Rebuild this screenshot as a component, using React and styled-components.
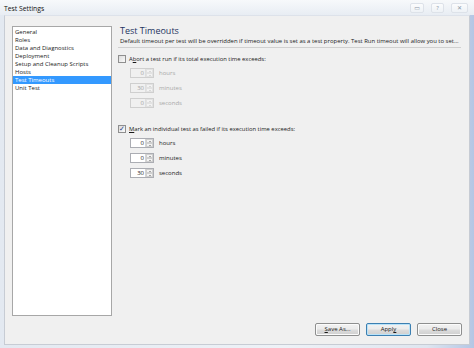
import React from "react";
import styled, { createGlobalStyle } from "styled-components";

const Global = createGlobalStyle`
  html, body { margin: 0; padding: 0; }
  body {
    width: 474px; height: 348px; overflow: hidden;
    background: linear-gradient(90deg, #e3e9f1 0%, #eef2f7 60%, #dfe6f0 90%, #b4c6e4 100%);
    font-family: "Open Sans", "Noto Sans", "DejaVu Sans", sans-serif;
  }
`;

const Window = styled.div`
  width: 474px; height: 348px; display: flex; flex-direction: column; box-sizing: border-box;
`;

const TitleBar = styled.div`
  height: 15px; flex: none; display: flex; align-items: center; padding: 0 6px 0 4px;
  background: linear-gradient(180deg, #f7f9fb 0%, #e8edf3 100%);
`;

const Title = styled.div`
  font-size: 6.8px; color: #111; flex: 1; padding-top: 1px;
`;

const Caption = styled.div`
  display: flex; gap: 7px; align-items: center;
`;

const CapButton = styled.div`
  width: ${p => p.$w}px; height: 10px; border: 1px solid #dde2e9; border-radius: 2px;
  background: linear-gradient(180deg, #fbfcfd, #eef2f6);
  display: flex; align-items: center; justify-content: center;
  font-size: 6px; color: #8a96a6; box-sizing: border-box;
`;

const Client = styled.div`
  flex: 1; margin: 0 4px 6px 4px; background: #f0f0f0;
  border: 1px solid #c7ccd4; border-top: 1px solid #dde2ea;
  display: flex; flex-direction: column; box-sizing: border-box;
`;

const Body = styled.div`
  flex: 1; display: flex; gap: 6px; padding: 8px 8px 0 7px; min-width: 0;
`;

const List = styled.div`
  flex: none; width: 100px; height: 290px; margin-top: 2px; box-sizing: border-box; background: #fff;
  border: 1px solid #a7a7a7; padding-top: 1px; display: flex; flex-direction: column;
`;

const Item = styled.div`
  height: 8px; line-height: 8px; font-size: 6px; padding-left: 2px;
  color: ${p => (p.$sel ? "#fff" : "#1a1a1a")};
  background: ${p => (p.$sel ? "#3399ff" : "transparent")};
  white-space: nowrap;
`;

const Panel = styled.div`
  flex: 1; min-width: 0; display: flex; flex-direction: column;
`;

const Heading = styled.div`
  font-size: 9px; color: #1f3562; padding-left: 2px; line-height: 13px;
`;

const Desc = styled.div`
  font-size: 5.95px; color: #1a1a1a; padding-left: 2px; line-height: 9px; white-space: nowrap;
  overflow: hidden; border-bottom: 1px solid #d0d0d0; padding-bottom: 1px;
`;

const CheckRow = styled.div`
  display: flex; align-items: center; gap: 3px; margin-top: ${p => p.$mt}px;
  font-size: 5.85px; color: #1a1a1a; height: 9px;
`;

const Box = styled.div`
  width: 8px; height: 8px; box-sizing: border-box; border: 1px solid #8f8f8f;
  background: linear-gradient(135deg, #dcdcdc, #fbfbfb);
  display: flex; align-items: center; justify-content: center;
  font-size: 7px; color: #1b3f8b; line-height: 8px;
`;

const SpinGroup = styled.div`
  display: flex; flex-direction: column; gap: 5px; padding-left: 12px; margin-top: 5px;
`;

const SpinRow = styled.div`
  display: flex; align-items: center; gap: 5px;
`;

const Spin = styled.div`
  display: flex; height: 10px; width: 24px; box-sizing: border-box;
  border: 1px solid ${p => (p.$off ? "#cfcfcf" : "#abadb3")};
  background: ${p => (p.$off ? "#f0f0f0" : "#fff")};
`;

const SpinValue = styled.div`
  flex: 1; text-align: right; font-size: 6px; line-height: 8px; padding-right: 1px;
  color: ${p => (p.$off ? "#a3a3a3" : "#1a1a1a")};
`;

const Arrows = styled.div`
  width: 7px; display: flex; flex-direction: column;
  border-left: 1px solid ${p => (p.$off ? "#dedede" : "#d5d5d5")};
`;

const Arrow = styled.div`
  flex: 1; display: flex; align-items: center; justify-content: center;
  background: ${p => (p.$off ? "#f3f3f3" : "#f4f4f4")};
  border: 1px solid ${p => (p.$off ? "#e2e2e2" : "#cfcfcf")};
  box-sizing: border-box;
  &::after {
    content: ""; border-left: 1.5px solid transparent; border-right: 1.5px solid transparent;
    ${p => (p.$down ? "border-top" : "border-bottom")}: 1.5px solid ${p => (p.$off ? "#bbb" : "#555")};
  }
`;

const Unit = styled.div`
  font-size: 6px; color: ${p => (p.$off ? "#a8a8a8" : "#1a1a1a")};
`;

const Footer = styled.div`
  height: 26px; flex: none; display: flex; justify-content: flex-end; align-items: center;
  gap: 6px; padding-right: 7px; padding-bottom: 2px;
`;

const Button = styled.div`
  width: 45px; height: 13px; box-sizing: border-box; border-radius: 2px;
  border: 1px solid ${p => (p.$def ? "#3c7fb1" : "#8e8f8f")};
  background: linear-gradient(180deg, #f2f2f2 0%, #ebebeb 48%, #dddddd 52%, #cfcfcf 100%);
  box-shadow: inset 0 0 0 1px ${p => (p.$def ? "#b9e3f9" : "#fbfbfb")};
  display: flex; align-items: center; justify-content: center;
  font-size: 6px; color: #1a1a1a;
`;

const U = styled.span`text-decoration: underline;`;

const items = ["General", "Roles", "Data and Diagnostics", "Deployment", "Setup and Cleanup Scripts", "Hosts", "Test Timeouts", "Unit Test"];

function Spinner({ value, unit, off }) {
  return (
    <SpinRow>
      <Spin $off={off}>
        <SpinValue $off={off}>{value}</SpinValue>
        <Arrows $off={off}>
          <Arrow $off={off} />
          <Arrow $off={off} $down />
        </Arrows>
      </Spin>
      <Unit $off={off}>{unit}</Unit>
    </SpinRow>
  );
}

export default function App() {
  return (
    <>
      <Global />
      <Window>
        <TitleBar>
          <Title>Test Settings</Title>
          <Caption>
            <CapButton $w={14}>▭</CapButton>
            <CapButton $w={13}>?</CapButton>
            <CapButton $w={17}>✕</CapButton>
          </Caption>
        </TitleBar>
        <Client>
          <Body>
            <List>
              {items.map(t => (
                <Item key={t} $sel={t === "Test Timeouts"}>{t}</Item>
              ))}
            </List>
            <Panel>
              <Heading>Test Timeouts</Heading>
              <Desc>Default timeout per test will be overridden if timeout value is set as a test property. Test Run timeout will allow you to set...</Desc>
              <CheckRow $mt={6}>
                <Box />
                <span>A<U>b</U>ort a test run if its total execution time exceeds:</span>
              </CheckRow>
              <SpinGroup>
                <Spinner value="0" unit="hours" off />
                <Spinner value="30" unit="minutes" off />
                <Spinner value="0" unit="seconds" off />
              </SpinGroup>
              <CheckRow $mt={16}>
                <Box>✓</Box>
                <span><U>M</U>ark an individual test as failed if its execution time exceeds:</span>
              </CheckRow>
              <SpinGroup>
                <Spinner value="0" unit="hours" />
                <Spinner value="0" unit="minutes" />
                <Spinner value="30" unit="seconds" />
              </SpinGroup>
            </Panel>
          </Body>
          <Footer>
            <Button><U>S</U>ave As...</Button>
            <Button $def>Appl<U>y</U></Button>
            <Button>Close</Button>
          </Footer>
        </Client>
      </Window>
    </>
  );
}
